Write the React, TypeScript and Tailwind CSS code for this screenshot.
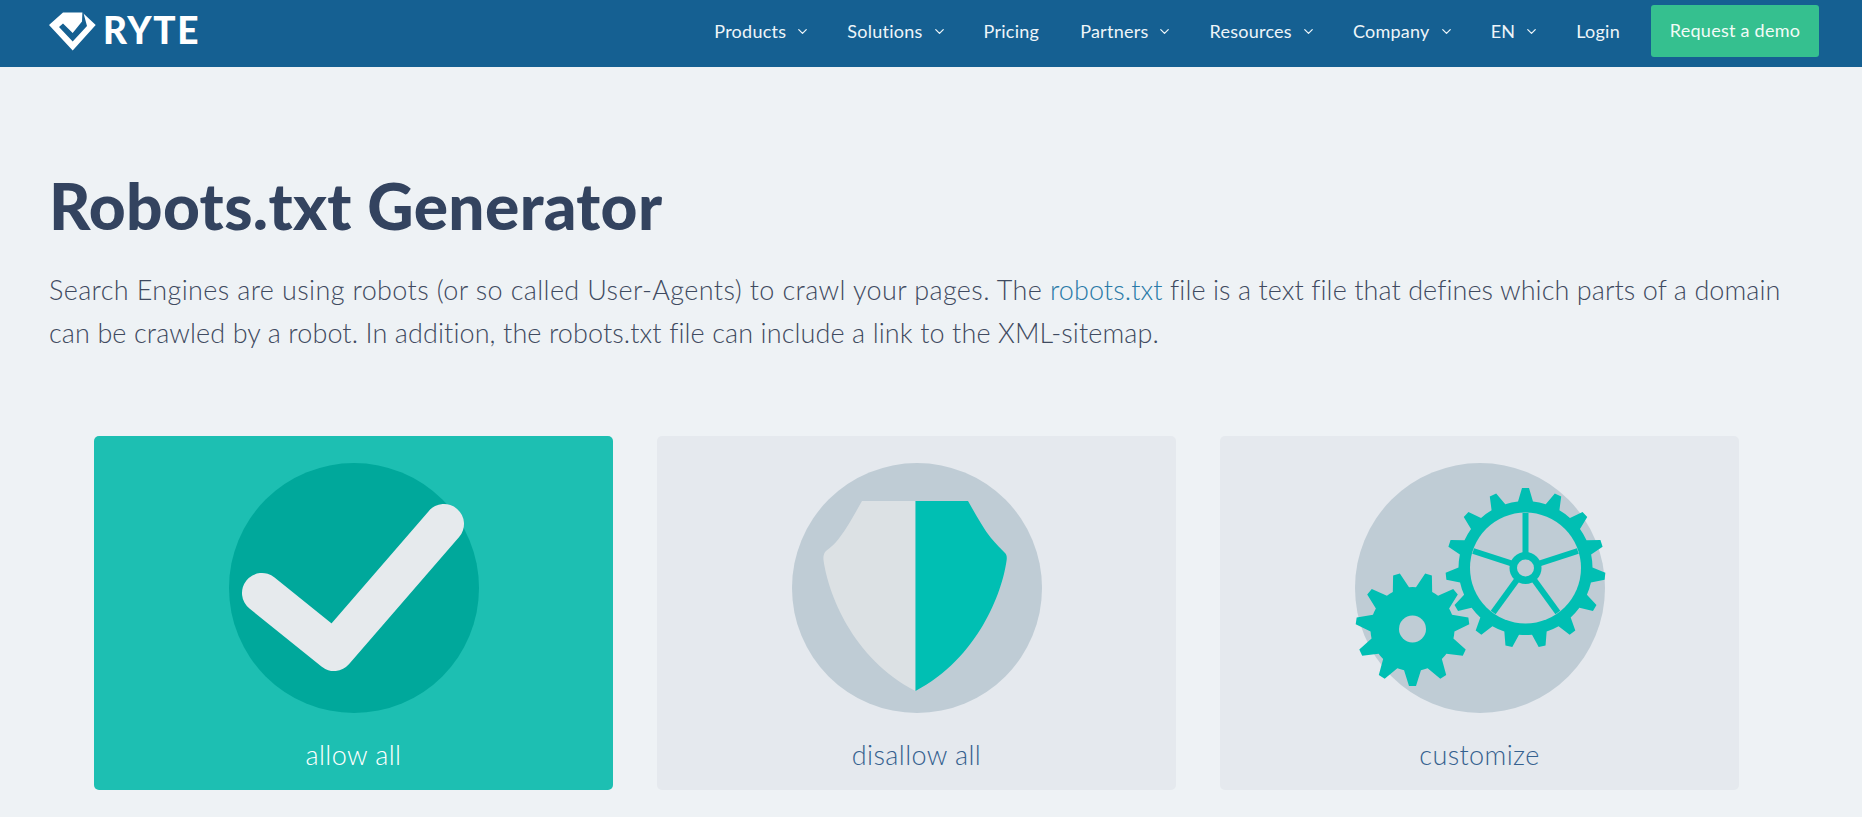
import { ChevronDown } from "lucide-react";

const font = "font-['Lato','Liberation_Sans',sans-serif]";

// builds a gear outline around (cx, cy)
function gearPath(cx: number, cy: number, teeth: number, root: number, tip: number, baseW: number, tipW: number, startDeg: number) {
  const parts: string[] = [];
  const pt = (r: number, a: number) => `${(cx + r * Math.sin(a)).toFixed(2)} ${(cy - r * Math.cos(a)).toFixed(2)}`;
  for (let i = 0; i < teeth; i++) {
    const a = ((startDeg + (i * 360) / teeth) * Math.PI) / 180;
    const b = baseW / 2 / root;
    const t = tipW / 2 / tip;
    parts.push(`${i === 0 ? "M" : "L"}${pt(root, a - b)}`, `L${pt(tip, a - t)}`, `L${pt(tip, a + t)}`, `L${pt(root, a + b)}`);
    const next = a + (2 * Math.PI) / teeth;
    parts.push(`A${root} ${root} 0 0 1 ${pt(root, next - b)}`);
  }
  return parts.join(" ") + "Z";
}

function Logo() {
  return (
    <svg width="47" height="39" viewBox="0 0 47 39" className="shrink-0">
      <path
        fill="#fff"
        fillRule="evenodd"
        d="M14 .5H33.4L46.7 13L23.7 38.5L0 13ZM10 15L14 11.5L23.7 21L33 9.5L33.4 .5L34.6 1.6L38 14L23.7 29.5Z"
      />
    </svg>
  );
}

function NavItem({ label, caret = true }: { label: string; caret?: boolean }) {
  return (
    <a className="flex items-center gap-[9px] text-[18px] tracking-[0.25px] text-[#eef5f9]">
      {label}
      {caret && <ChevronDown size={15} strokeWidth={2} className="-mr-[4px] mt-[1px]" />}
    </a>
  );
}

function CheckIcon() {
  return (
    <svg width="250" height="250" viewBox="0 0 250 250">
      <circle cx="125" cy="125" r="125" fill="#00a89b" />
      <path d="M33 130L105 188L215 61" fill="none" stroke="#e6eaed" strokeWidth="40" strokeLinecap="round" strokeLinejoin="round" />
    </svg>
  );
}

function ShieldIcon() {
  return (
    <svg width="250" height="250" viewBox="0 0 250 250">
      <circle cx="125" cy="125" r="125" fill="#bfccd5" />
      <path fill="#dce1e4" d="M123.5 38H70C62 52 55 65 48 74C43 81 38 85 34 88C32 90 31 93 31.5 97C36 130 60 195 123.5 228Z" />
      <path fill="#00bfb3" d="M123.5 38H176C184 52 191 65 199 75C204 81 209 86 213 90C215 92 215 95 214.5 98C210 130 186 195 123.5 228Z" />
    </svg>
  );
}

function GearsIcon() {
  const spokes = [0, 72, 144, 216, 288];
  return (
    <svg width="250" height="250" viewBox="0 0 250 250" className="overflow-visible">
      <circle cx="125" cy="125" r="125" fill="#bfccd5" />
      <path fill="#00bfb3" d={gearPath(170.5, 105, 15, 67, 80, 15, 7, 0)} />
      <circle cx="170.5" cy="105" r="55.5" fill="#bfccd5" />
      {spokes.map((deg) => (
        <rect key={deg} x="167.5" y="50" width="6" height="55" fill="#00bfb3" transform={`rotate(${deg} 170.5 105)`} />
      ))}
      <circle cx="170.5" cy="105" r="16" fill="#00bfb3" />
      <circle cx="170.5" cy="105" r="8.5" fill="#bfccd5" />
      <path fill="#00bfb3" d={gearPath(57.5, 166, 11, 42, 57, 17, 7, 180)} />
      <circle cx="57.5" cy="166" r="13.5" fill="#bfccd5" />
    </svg>
  );
}

function OptionCard({ label, active, children }: { label: string; active?: boolean; children: React.ReactNode }) {
  return (
    <div className={`flex h-[354px] flex-col items-center rounded-[5px] pt-[27px] ${active ? "bg-[#1dbfb2] text-white" : "bg-[#e5e9ee] text-[#35618f]"}`}>
      {children}
      <div className="mt-[24px] text-[27px] font-light leading-[36px] tracking-[0.4px]">{label}</div>
    </div>
  );
}

export default function App() {
  return (
    <div className={`h-[817px] overflow-hidden bg-[#eef2f5] ${font}`}>
      <header className="flex h-[67px] items-center bg-[#156092] pl-[49px] pr-[43px]">
        <div className="flex items-center gap-[7px] pb-[5px]">
          <Logo />
          <span className="mb-[4px] text-[37px] font-black leading-none tracking-[1.6px] text-white">RYTE</span>
        </div>
        <nav className="ml-auto flex items-center gap-[41px] pb-[5px]">
          <NavItem label="Products" />
          <NavItem label="Solutions" />
          <NavItem label="Pricing" caret={false} />
          <NavItem label="Partners" />
          <NavItem label="Resources" />
          <NavItem label="Company" />
          <NavItem label="EN" />
          <NavItem label="Login" caret={false} />
          <a className="-ml-[10px] flex h-[52px] w-[168px] items-center justify-center rounded-[3px] bg-[#35c08f] pb-[2px] text-[18px] tracking-[0.25px] text-[#f2fbf7]">
            Request a demo
          </a>
        </nav>
      </header>

      <main className="pl-[49px] pr-[123px] pt-[101px]">
        <h1 className="text-[64px] font-black leading-[76px] tracking-[0.35px] text-[#33435f]">Robots.txt Generator</h1>
        <p className="mt-[24px] whitespace-nowrap text-[27px] font-light leading-[43px] text-[#3f4a60]">
          <span className="tracking-[0.37px]">Search Engines are using robots (or so called User-Agents) to crawl your pages. The </span>
          <a className="tracking-[0.1px] text-[#2a7aa8]">robots.txt</a>
          <span className="tracking-[0.07px]"> file is a text file that defines which parts of a domain</span>
          <br />
          <span className="tracking-[0.1px]">can be crawled by a robot. In addition, the robots.txt file can include a link to the XML-sitemap.</span>
        </p>
        <div className="ml-[45px] mt-[82px] grid grid-cols-3 gap-[44px]">
          <OptionCard label="allow all" active>
            <CheckIcon />
          </OptionCard>
          <OptionCard label="disallow all">
            <ShieldIcon />
          </OptionCard>
          <OptionCard label="customize">
            <GearsIcon />
          </OptionCard>
        </div>
      </main>
    </div>
  );
}
